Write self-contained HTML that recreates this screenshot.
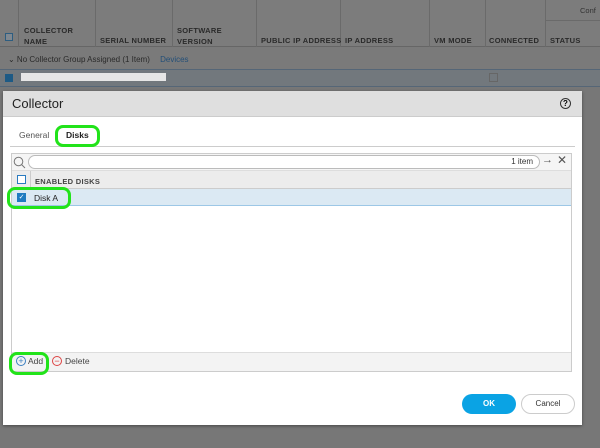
<!DOCTYPE html>
<html><head><style>
*{box-sizing:border-box;margin:0;padding:0}
body{width:600px;height:448px;overflow:hidden;background:#777;font-family:"Liberation Sans",sans-serif;position:relative}
.a{position:absolute}
.th{font-size:7.5px;color:#2a2a2a;font-weight:bold;letter-spacing:.3px}
.vl{position:absolute;top:0;height:47px;width:1px;background:#6a6a6a}
.g{border:3px solid #22e31a;border-radius:8px;position:absolute}
</style></head><body>
<div class="a" style="left:0;top:0;width:600px;height:47px;background:#7c7c7c;border-bottom:1px solid #666"></div>
<div class="vl" style="left:18px"></div><div class="vl" style="left:95px"></div><div class="vl" style="left:172px"></div><div class="vl" style="left:256px"></div><div class="vl" style="left:340px"></div><div class="vl" style="left:429px"></div><div class="vl" style="left:485px"></div><div class="vl" style="left:545px"></div>
<div class="a" style="left:545px;top:20px;width:55px;height:1px;background:#6a6a6a"></div>
<div class="a" style="left:5px;top:33px;width:8px;height:8px;border:1px solid #2d5d80;background:#808890"></div>
<div class="a th" style="left:24px;top:25px;line-height:11px">COLLECTOR<br>NAME</div>
<div class="a th" style="left:100px;top:36px">SERIAL NUMBER</div>
<div class="a th" style="left:177px;top:25px;line-height:11px">SOFTWARE<br>VERSION</div>
<div class="a th" style="left:261px;top:36px">PUBLIC IP ADDRESS</div>
<div class="a th" style="left:345px;top:36px">IP ADDRESS</div>
<div class="a th" style="left:434px;top:36px">VM MODE</div>
<div class="a th" style="left:489px;top:36px">CONNECTED</div>
<div class="a th" style="left:550px;top:36px">STATUS</div>
<div class="a" style="left:580px;top:6px;font-size:7.5px;color:#333">Conf</div>
<div class="a" style="left:0;top:47px;width:600px;height:23px;background:#7a7a7a;border-bottom:1px solid #567"></div>
<div class="a" style="left:8px;top:55px;font-size:8px;color:#2a2a2a">⌄ No Collector Group Assigned (1 Item) <span style="color:#234f78;margin-left:8px">Devices</span></div>
<div class="a" style="left:0;top:70px;width:600px;height:17px;background:#72787d;border-bottom:1px solid #567"></div>
<div class="a" style="left:5px;top:74px;width:8px;height:8px;background:#1d5a85"></div>
<div class="a" style="left:21px;top:73px;width:145px;height:8px;background:#e6e6e6"></div>
<div class="a" style="left:489px;top:73px;width:9px;height:9px;border:1px solid #666"></div>
<div class="a" style="left:3px;top:91px;width:579px;height:334px;background:#fff;box-shadow:0 1px 3px rgba(0,0,0,.4)">
 <div class="a" style="left:0;top:0;width:579px;height:26px;background:#dfdfdf;border-bottom:1px solid #ccc"></div>
 <div class="a" style="left:9px;top:5px;font-size:13px;color:#222">Collector</div>
 <div class="a" style="left:557px;top:7px;width:11px;height:11px;border:1px solid #333;border-radius:50%;font-size:8px;text-align:center;line-height:10px;font-weight:bold">?</div>
 <div class="a" style="left:16px;top:39px;font-size:8.5px;color:#555">General</div>
 <div class="a" style="left:63px;top:39px;font-size:8.5px;color:#222;font-weight:bold">Disks</div>
 <div class="a" style="left:7px;top:55px;width:565px;height:1px;background:#ccc"></div>
 <div class="a" style="left:8px;top:62px;width:561px;height:219px;border:1px solid #ccc;background:#fff">
  <div class="a" style="left:0;top:0;width:559px;height:17px;background:#f5f5f5;border-bottom:1px solid #ddd"></div>
  <svg class="a" style="left:1px;top:2px" width="13" height="13"><circle cx="5.5" cy="5.5" r="4.3" fill="none" stroke="#777"/><line x1="8.5" y1="8.5" x2="12" y2="12" stroke="#777"/></svg>
  <div class="a" style="left:16px;top:1px;width:512px;height:14px;border:1px solid #bbb;border-radius:7px;background:#fff;font-size:8px;text-align:right;padding-right:6px;line-height:12px;color:#333">1 item</div>
  <div class="a" style="left:530px;top:0;font-size:11px;color:#555">→</div>
  <div class="a" style="left:545px;top:-1px;font-size:12px;color:#555">✕</div>
  <div class="a" style="left:0;top:17px;width:559px;height:18px;background:#ececec;border-bottom:1px solid #ccc"></div>
  <div class="a" style="left:18px;top:17px;width:1px;height:18px;background:#ccc"></div>
  <div class="a" style="left:5px;top:21px;width:9px;height:9px;border:1px solid #2a7bc0;background:#fff"></div>
  <div class="a th" style="left:23px;top:23px;color:#444">ENABLED DISKS</div>
  <div class="a" style="left:0;top:35px;width:559px;height:17px;background:#dbe9f3;border-bottom:1px solid #9cc7e6"></div>
  <div class="a" style="left:5px;top:39px;width:9px;height:9px;background:#1f7bc0;color:#fff;font-size:7px;line-height:9px;text-align:center">✓</div>
  <div class="a" style="left:22px;top:39px;font-size:8.5px;color:#222">Disk A</div>
  <div class="a" style="left:0;top:198px;width:559px;height:19px;background:#f3f3f3;border-top:1px solid #ddd"></div>
  <div class="a" style="left:4px;top:202px;width:10px;height:10px;border:1px solid #3b7fc0;border-radius:50%;color:#3b7fc0;font-size:9px;line-height:8px;text-align:center">+</div>
  <div class="a" style="left:16px;top:202px;font-size:8.5px;color:#444">Add</div>
  <div class="a" style="left:40px;top:202px;width:10px;height:10px;border:1px solid #d44;border-radius:50%;color:#d44;font-size:9px;line-height:8px;text-align:center">−</div>
  <div class="a" style="left:53px;top:202px;font-size:8.5px;color:#444">Delete</div>
 </div>
 <div class="a" style="left:459px;top:303px;width:54px;height:20px;border-radius:10px;background:#0aa3e4;color:#fff;font-size:8px;font-weight:bold;text-align:center;line-height:20px">OK</div>
 <div class="a" style="left:518px;top:303px;width:54px;height:20px;border-radius:10px;border:1px solid #ccc;background:#fff;color:#333;font-size:8px;text-align:center;line-height:18px">Cancel</div>
</div>
<div class="g" style="left:55px;top:125px;width:45px;height:22px"></div>
<div class="g" style="left:7px;top:187px;width:64px;height:22px"></div>
<div class="g" style="left:9px;top:352px;width:40px;height:23px"></div>
</body></html>
